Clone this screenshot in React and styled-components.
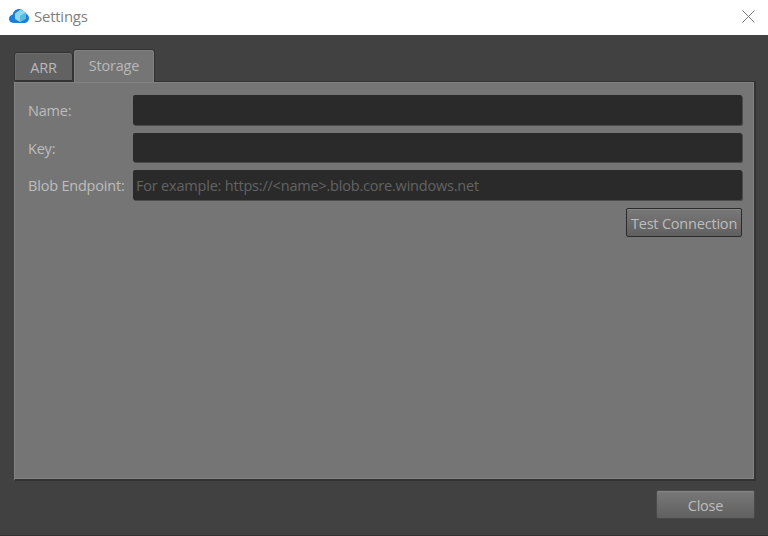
import React from 'react';
import styled, { createGlobalStyle } from 'styled-components';

const GlobalStyle = createGlobalStyle`
html, body {
  margin: 0;
  padding: 0;
  width: 768px;
  height: 536px;
  overflow: hidden;
  font-family: "Open Sans", "Noto Sans", sans-serif;
}
* { box-sizing: border-box; }
`;

const Window = styled.div`
width: 768px;
height: 536px;
display: flex;
flex-direction: column;
background-color: #414141;
border-bottom: 1px solid #333;
`;
const TitleBar = styled.div`
height: 35px;
flex: none;
display: flex;
align-items: center;
padding: 0 13px 3px 9px;
background-color: #fff;
`;
const Title = styled.span`
margin-left: 5px;
font-size: 15px;
color: #7f7f7f;
letter-spacing: -0.25px;
`;
const CloseIcon = styled.svg`
margin-left: auto;
width: 13px;
height: 13px;
`;
const Body = styled.div`
flex: 1;
display: flex;
flex-direction: column;
padding: 14px 12px 0 14px;
`;
const Tabs = styled.div`
height: 32px;
flex: none;
display: flex;
align-items: flex-end;
`;
const Tab = styled.div`
width: ${(p) => (p.$active ? '82px' : '59px')};
height: ${(p) => (p.$active ? '33px' : '29px')};
margin-bottom: ${(p) => (p.$active ? '-1px' : '0')};
position: relative;
z-index: ${(p) => (p.$active ? 1 : 0)};
display: flex;
align-items: center;
justify-content: center;
padding-top: ${(p) => (p.$active ? '0' : '2px')};
padding-bottom: ${(p) => (p.$active ? '2px' : '0')};
font-size: 14.5px;
letter-spacing: -0.2px;
color: #b9b9b9;
background-color: ${(p) => (p.$active ? '#757575' : '#626262')};
border: 1px solid #333;
border-bottom: ${(p) => (p.$active ? 'none' : '1px solid #333')};
border-radius: 3px 3px 0 0;
box-shadow: ${(p) => (p.$active ? 'inset 1px 1px 0 #808080, inset -1px 0 0 #808080' : 'inset 1px 1px 0 #6e6e6e')};
`;
const Panel = styled.div`
height: 400px;
flex: none;
display: flex;
flex-direction: column;
gap: 8px;
padding: 13px 12px 0 13px;
background-color: #757575;
border-top: 1px solid #333;
border-left: 1px solid #828282;
border-right: 2px solid #333;
border-bottom: 2px solid #333;
box-shadow: inset 0 1px 0 #828282, inset -1px 0 0 #828282, inset 0 -1px 0 #828282;
`;
const Row = styled.div`
display: flex;
align-items: center;
gap: 8px;
`;
const Label = styled.label`
width: 97px;
flex: none;
padding-top: ${(p) => p.$nudge || 0}px;
font-size: 14.5px;
letter-spacing: -0.2px;
white-space: nowrap;
color: #bdbdbd;
`;
const Input = styled.input`
flex: 1;
min-width: 0;
height: ${(p) => p.$h || 30}px;
padding: 0 3px;
font-family: inherit;
font-size: 14.5px;
letter-spacing: -0.2px;
color: #bdbdbd;
background-color: #2a2a2a;
border: none;
border-radius: 2px;
outline: none;
box-shadow: 1px 1px 0 #4c4c4c;
&::placeholder {
  color: #636363;
  opacity: 1;
}
`;
const ButtonRow = styled.div`
display: flex;
justify-content: flex-end;
`;
const Button = styled.button`
width: ${(p) => p.$w}px;
height: 29px;
padding: 1px 0 0;
font-family: inherit;
font-size: 14.5px;
letter-spacing: -0.2px;
color: #bdbdbd;
background: linear-gradient(#787878, #606060);
border: 1px solid ${(p) => p.$edge};
border-radius: 2px;
box-shadow: inset 0 1px 0 #868686;
`;
const Footer = styled.div`
flex: 1;
display: flex;
justify-content: flex-end;
align-items: flex-start;
padding: 9px 1px 0 0;
`;

const App = () => {
    return (
        <Window>
            <GlobalStyle />
            <TitleBar>
                <svg width="20" height="16" viewBox="0 0 20 16">
                    <path d="M5 15 C1.5 15 0 13 0 10.8 C0 8.6 1.6 7 3.6 6.8 C4.2 3.2 7 1 10 1 C12.8 1 14.8 2.6 15.6 5.2 C18 5.4 20 7.4 20 10 C20 12.8 18 15 15.4 15 Z" fill="#1b7fd6" />
                    <path d="M6 5.5 L11.5 1.6 L17 4.2 L17 10.5 L11 14 L6 11 Z" fill="#8fd8ee" />
                    <path d="M11 7.8 L17 4.2 L17 10.5 L11 14 Z" fill="#56bce6" />
                </svg>
                <Title>Settings</Title>
                <CloseIcon viewBox="0 0 13 13">
                    <path d="M0.5 0.5 L12.5 12.5 M12.5 0.5 L0.5 12.5" stroke="#7a7a7a" strokeWidth="1" fill="none" />
                </CloseIcon>
            </TitleBar>
            <Body>
                <Tabs>
                    <Tab>ARR</Tab>
                    <Tab $active>Storage</Tab>
                </Tabs>
                <Panel>
                    <Row>
                        <Label>Name:</Label>
                        <Input />
                    </Row>
                    <Row>
                        <Label $nudge={1}>Key:</Label>
                        <Input $h={29} />
                    </Row>
                    <Row>
                        <Label>Blob Endpoint:</Label>
                        <Input placeholder="For example: https://<name>.blob.core.windows.net" />
                    </Row>
                    <ButtonRow>
                        <Button $w={116} $edge="#2b2b2b">Test Connection</Button>
                    </ButtonRow>
                </Panel>
                <Footer>
                    <Button $w={99} $edge="#4a4a4a">Close</Button>
                </Footer>
            </Body>
        </Window>
    )
}

export default App
